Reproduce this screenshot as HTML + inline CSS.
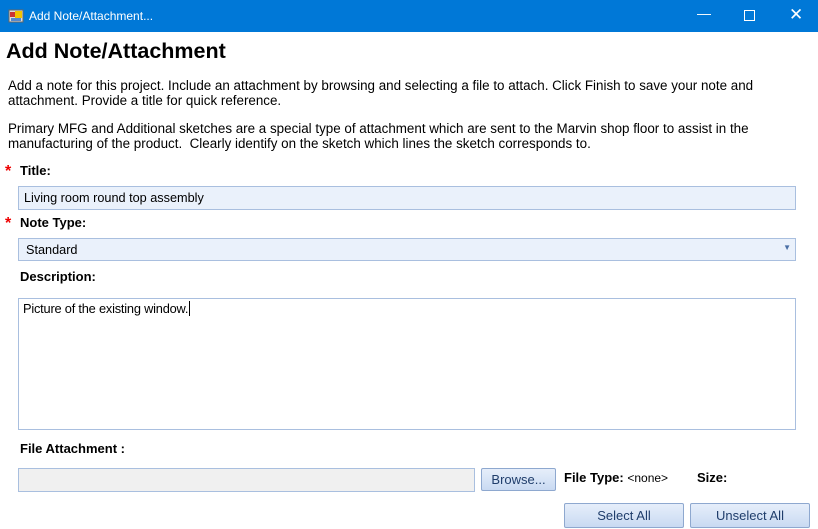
<!DOCTYPE html>
<html><head><style>
body{margin:0;width:818px;height:529px;background:#fff;font-family:"Liberation Sans",sans-serif;font-size:12px;color:#000;position:relative;overflow:hidden}
.a{position:absolute;white-space:nowrap}
.tb{position:absolute;left:0;top:0;width:818px;height:32px;background:#0078d7;color:#fff}
.box{position:absolute;border:1px solid #a9bfdf;background:#eaf1fb;box-sizing:border-box}
.btn{position:absolute;box-sizing:border-box;border:1px solid #8ea8cf;border-radius:2px;background:linear-gradient(#e6eefa,#c9daf2);text-align:center;color:#1f3d6b;font-size:13px}
.star{color:#e00;font-weight:bold}
b{font-weight:bold}
</style></head><body>
<div class="tb">
<svg class="a" style="left:8px;top:8px" width="16" height="16"><rect x="1" y="2" width="14" height="12" fill="#ddd" stroke="#666"/><rect x="2" y="4" width="5" height="5" fill="#c33"/><rect x="7" y="3" width="7" height="7" fill="#f2c300"/><rect x="3" y="10" width="10" height="3" fill="#5588cc"/></svg>
<div class="a" style="left:29px;top:9px;font-size:12px">Add Note/Attachment...</div>
<div class="a" style="left:697px;top:5px;font-size:14px">&#8212;</div>
<div class="a" style="left:744px;top:10px;width:9px;height:9px;border:1px solid #fff"></div>
<div class="a" style="left:789px;top:5px;font-size:17px">&#10005;</div>
</div>
<div class="a" style="left:6px;top:39px;font-size:21.5px;font-weight:bold">Add Note/Attachment</div>
<div class="a" style="left:8px;top:78px;line-height:15px;font-size:13.4px">Add a note for this project. Include an attachment by browsing and selecting a file to attach. Click Finish to save your note and<br>attachment. Provide a title for quick reference.</div>
<div class="a" style="left:8px;top:121px;line-height:15px;font-size:13.4px">Primary MFG and Additional sketches are a special type of attachment which are sent to the Marvin shop floor to assist in the<br>manufacturing of the product.&nbsp; Clearly identify on the sketch which lines the sketch corresponds to.</div>
<div class="a star" style="left:5px;top:163px;font-size:16px">*</div>
<div class="a" style="left:20px;top:163px;font-size:13px"><b>Title:</b></div>
<div class="box" style="left:18px;top:186px;width:778px;height:24px"><span class="a" style="left:5px;top:4px;font-size:12.7px">Living room round top assembly</span></div>
<div class="a star" style="left:5px;top:215px;font-size:16px">*</div>
<div class="a" style="left:20px;top:215px;font-size:13px"><b>Note Type:</b></div>
<div class="box" style="left:18px;top:238px;width:778px;height:23px"><span class="a" style="left:7px;top:4px;font-size:12.7px">Standard</span><span class="a" style="right:4px;top:4px;font-size:8px;color:#4a6fa5">&#9660;</span></div>
<div class="a" style="left:20px;top:269px;font-size:13px"><b>Description:</b></div>
<div class="box" style="left:18px;top:298px;width:778px;height:132px;background:#fff"><span class="a" style="left:4px;top:2px;font-size:12.8px;letter-spacing:-0.2px">Picture of the existing window.<span style="border-left:1px solid #000;margin-left:1px"></span></span></div>
<div class="a" style="left:20px;top:441px;font-size:13px"><b>File Attachment :</b></div>
<div class="a" style="left:18px;top:468px;width:457px;height:24px;box-sizing:border-box;border:1px solid #a9bfdf;background:#f0f0f0"></div>
<div class="btn" style="left:481px;top:468px;width:75px;height:23px;line-height:21px">Browse...</div>
<div class="a" style="left:564px;top:470px;font-size:13px"><b>File Type:</b> <span style="font-size:12px">&lt;none&gt;</span></div>
<div class="a" style="left:697px;top:470px;font-size:13px"><b>Size:</b></div>
<div class="btn" style="left:564px;top:503px;width:120px;height:25px;line-height:23px">Select All</div>
<div class="btn" style="left:690px;top:503px;width:120px;height:25px;line-height:23px">Unselect All</div>
</body></html>
